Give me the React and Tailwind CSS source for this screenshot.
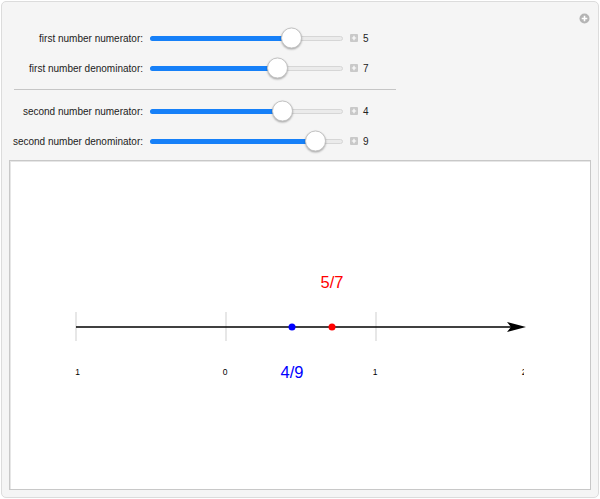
const font = { fontFamily: '"Liberation Sans", Arial, sans-serif' }

function PlusBox() {
  return (
    <svg width="8" height="8" viewBox="0 0 8 8" className="shrink-0">
      <rect x="0" y="0" width="8" height="8" rx="1" fill="#c9c9c9" />
      <path d="M4 1.8v4.4M1.8 4h4.4" stroke="#fff" strokeWidth="1.2" />
    </svg>
  )
}

function SliderRow({ label, value, thumbLeft, fillWidth }) {
  return (
    <div className="flex items-center h-[20px]">
      <div className="w-[141px] text-right text-[10px] text-[#222]">{label}</div>
      <div className="relative ml-[7px] w-[193px] h-[5px] rounded-full bg-[#ebebeb] border border-[#d6d6d6]">
        <div className={`absolute -left-px -top-px h-[5px] rounded-full bg-[#1680f8] ${fillWidth}`} />
        <div
          className={`absolute top-1/2 -translate-y-1/2 w-[21px] h-[21px] rounded-full bg-white border border-[#c4c4c4] shadow-[0_1px_2px_rgba(0,0,0,0.3)] ${thumbLeft}`}
        />
      </div>
      <div className="ml-[7px]">
        <PlusBox />
      </div>
      <div className="ml-[5px] text-[10px] text-[#222]">{value}</div>
    </div>
  )
}

function Plot() {
  return (
    <svg width="580" height="329" viewBox="0 0 580 329" style={font}>
      <defs>
        <clipPath id="clipr">
          <rect x="0" y="0" width="514" height="329" />
        </clipPath>
      </defs>
      {[66, 216, 366].map((x) => (
        <line key={x} x1={x} y1="151" x2={x} y2="180" stroke="#cfcfcf" strokeWidth="1" />
      ))}
      <line x1="66" y1="166" x2="502" y2="166" stroke="#000" strokeWidth="1.6" />
      <path d="M497 161 L516 166 L497 171 L501 166 Z" fill="#000" />
      <circle cx="282" cy="166" r="3.5" fill="#0000ff" />
      <circle cx="322" cy="166" r="3.5" fill="#ff0000" />
      <g clipPath="url(#clipr)">
        <g fontSize="8.5" fill="#000" textAnchor="middle">
          <text x="67.5" y="214">1</text>
          <text x="215" y="214">0</text>
          <text x="365" y="214">1</text>
          <text x="514" y="214">2</text>
        </g>
      </g>
      <text x="322" y="127" fontSize="16.5" fill="#ff0000" textAnchor="middle">5/7</text>
      <text x="282" y="217" fontSize="16.5" fill="#0000ff" textAnchor="middle">4/9</text>
    </svg>
  )
}

export default function App() {
  return (
    <div className="w-[600px] h-[499px] bg-white pt-px px-px" style={font}>
      <div className="relative w-[598px] h-[497px] rounded-[5px] border border-[#dcdcdc] bg-[#f5f5f5] pt-[26px]">
        {/* corner plus */}
        <svg className="absolute right-[8px] top-[11px]" width="11" height="11" viewBox="0 0 11 11">
          <circle cx="5.5" cy="5.5" r="5" fill="#b4b4b4" />
          <path d="M5.5 2.7v5.6M2.7 5.5h5.6" stroke="#fff" strokeWidth="1.6" />
        </svg>

        <div className="flex flex-col gap-[10px]">
          <SliderRow label="first number numerator:" value="5" thumbLeft="left-[130px]" fillWidth="w-[142px]" />
          <SliderRow label="first number denominator:" value="7" thumbLeft="left-[116px]" fillWidth="w-[128px]" />
        </div>

        <div className="ml-[12px] mt-[11px] w-[382px] h-px bg-[#c6c6c6]" />

        <div className="mt-[11px] flex flex-col gap-[10px]">
          <SliderRow label="second number numerator:" value="4" thumbLeft="left-[121px]" fillWidth="w-[133px]" />
          <SliderRow label="second number denominator:" value="9" thumbLeft="left-[154px]" fillWidth="w-[166px]" />
        </div>

        <div className="ml-[7px] mt-[9px] w-[582px] h-[330px] bg-white border border-[#c8c8c8] shadow-[inset_1px_1px_0_#e6e6e6]">
          <Plot />
        </div>
      </div>
    </div>
  )
}
